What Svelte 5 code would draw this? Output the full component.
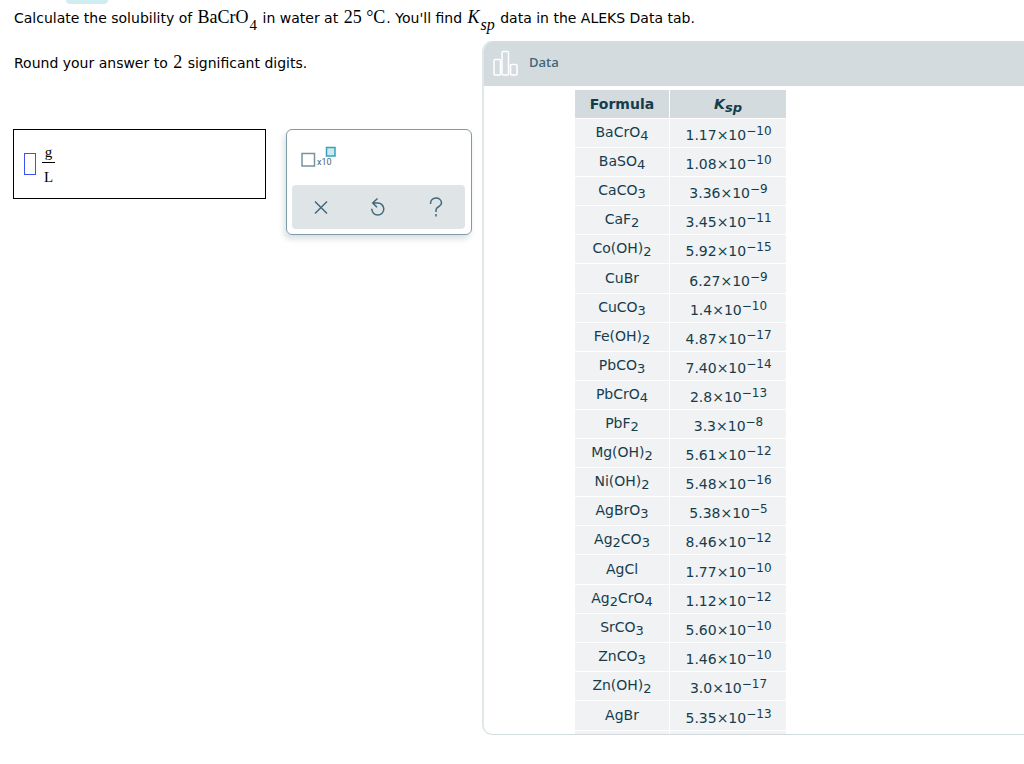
<script lang="ts">
    let answer = '';

    // digits after a letter or bracket are set as subscripts
    const rows = [
        ['BaCrO4', '1.17', '10'],
        ['BaSO4', '1.08', '10'],
        ['CaCO3', '3.36', '9'],
        ['CaF2', '3.45', '11'],
        ['Co(OH)2', '5.92', '15'],
        ['CuBr', '6.27', '9'],
        ['CuCO3', '1.4', '10'],
        ['Fe(OH)2', '4.87', '17'],
        ['PbCO3', '7.40', '14'],
        ['PbCrO4', '2.8', '13'],
        ['PbF2', '3.3', '8'],
        ['Mg(OH)2', '5.61', '12'],
        ['Ni(OH)2', '5.48', '16'],
        ['AgBrO3', '5.38', '5'],
        ['Ag2CO3', '8.46', '12'],
        ['AgCl', '1.77', '10'],
        ['Ag2CrO4', '1.12', '12'],
        ['SrCO3', '5.60', '10'],
        ['ZnCO3', '1.46', '10'],
        ['Zn(OH)2', '3.0', '17'],
        ['AgBr', '5.35', '13']
    ];

    function split(formula: string) {
        return formula.match(/\d+|\D+/g) || [];
    }

    function clearAnswer() {
        answer = '';
    }
</script>

<div class="page">
    <div class="top"><span class="pill"></span></div>

    <p class="question">
        Calculate the solubility of <span class="math">BaCrO<sub>4</sub></span> in water at
        <span class="math">25 °C</span>. You'll find
        <span class="math"><i>K</i><sub class="sp">sp</sub></span> data in the ALEKS Data tab.
    </p>

    <div class="columns">
        <div class="work">
            <p class="round">Round your answer to <span class="math">2</span> significant digits.</p>

            <div class="entry">
                <div class="answer">
                    <input type="text" aria-label="Answer in grams per litre" bind:value={answer} />
                    <span class="fraction">
                        <span class="num">g</span>
                        <span class="den">L</span>
                    </span>
                </div>

                <div class="palette">
                    <button class="sci" aria-label="Scientific notation">
                        <svg width="36" height="22" viewBox="0 0 36 22">
                            <rect x="1" y="7.5" width="12.5" height="12.5" fill="#fff" stroke="#78929e" stroke-width="1.5" />
                            <rect x="25.5" y="1.5" width="8.5" height="8.5" fill="#c9eaf1" stroke="#3ba0b8" stroke-width="1.5" />
                            <text x="16" y="19" font-size="9">x10</text>
                        </svg>
                    </button>
                    <div class="tools">
                        <button aria-label="Clear" on:click={clearAnswer}>
                            <svg width="22" height="22" viewBox="0 0 22 22">
                                <path d="M5 5.5L17 17.5M17 5.5L5 17.5" />
                            </svg>
                        </button>
                        <button aria-label="Undo">
                            <svg width="22" height="22" viewBox="0 0 22 22">
                                <path d="M4.8 12.8A6 6 0 1 0 10.5 7H5.7M10.5 2.5L5.7 7L10 11.3" />
                            </svg>
                        </button>
                        <button aria-label="Help">
                            <svg width="22" height="22" viewBox="0 0 22 22">
                                <path d="M5.5 8C5.2 0.3 16.5 0.3 16.5 7C16.5 11 11 10.5 11 14V16M11 18V20.5" />
                            </svg>
                        </button>
                    </div>
                </div>
            </div>
        </div>

        <section class="panel">
            <header>
                <svg width="26" height="27" viewBox="0 0 26 27">
                    <rect x="1" y="9.5" width="6.5" height="15.5" rx="1" />
                    <rect x="9" y="1.5" width="6.5" height="23.5" rx="1" />
                    <rect x="17.5" y="14.5" width="6.5" height="10.5" rx="1" />
                </svg>
                <h2>Data</h2>
            </header>
            <div class="scroller">
                <table>
                    <thead>
                        <tr>
                            <th>Formula</th>
                            <th><i>K<sub>sp</sub></i></th>
                        </tr>
                    </thead>
                    <tbody>
                        {#each rows as [formula, value, power]}
                            <tr class:plain={!/\d/.test(formula)}>
                                <td>
                                    {#each split(formula) as part}{#if /\d/.test(part)}<sub>{part}</sub>{:else}{part}{/if}{/each}
                                </td>
                                <td class="value">{value}×10<sup>−{power}</sup></td>
                            </tr>
                        {/each}
                        <tr><td></td><td></td></tr>
                    </tbody>
                </table>
            </div>
        </section>
    </div>
</div>

<style>
    :global(body) {
        margin: 0;
        background: #fff;
    }

    .page {
        height: 100vh;
        display: flex;
        flex-direction: column;
        overflow: hidden;
        font-family: Verdana, "DejaVu Sans", sans-serif;
        font-size: 14px;
        color: #000;
    }

    .top {
        height: 6px;
        padding-left: 66px;
    }

    .pill {
        display: block;
        width: 42px;
        height: 4px;
        border-radius: 0 0 8px 8px;
        background: #d0edf2;
    }

    p {
        margin: 0;
        padding-left: 14px;
        line-height: 24px;
        white-space: nowrap;
    }

    .question {
        height: 35px;
    }

    .math {
        margin: 0 1px;
        font-family: "Liberation Serif", "Times New Roman", serif;
        font-size: 18px;
        line-height: 18px;
    }

    .math sub {
        font-size: 15px;
        line-height: 0;
        vertical-align: -7px;
        margin-left: 1px;
    }

    .math .sp {
        font-size: 16px;
        font-style: italic;
    }

    .columns {
        flex: 1;
        min-height: 0;
        display: grid;
        grid-template-columns: 482px 1fr;
        padding-bottom: 29px;
    }

    .round {
        padding-top: 10px;
    }

    .entry {
        display: flex;
        align-items: flex-start;
        gap: 20px;
        padding: 54px 10px 0 13px;
    }

    .answer {
        flex: 1;
        height: 70px;
        box-sizing: border-box;
        display: flex;
        align-items: center;
        gap: 6px;
        padding-left: 10px;
        border: 1px solid #000;
    }

    .answer input {
        width: 12px;
        height: 22px;
        box-sizing: border-box;
        padding: 0;
        border: 1px solid #3d50f5;
        outline: none;
        background: #fff;
    }

    .fraction {
        display: flex;
        flex-direction: column;
        width: 13px;
        font-family: "Liberation Serif", "Times New Roman", serif;
        font-size: 15px;
        line-height: 20px;
        text-align: center;
    }

    .num {
        border-bottom: 1px solid #000;
    }

    .den {
        padding-top: 4px;
    }

    .palette {
        width: 186px;
        height: 106px;
        box-sizing: border-box;
        display: flex;
        flex-direction: column;
        justify-content: space-between;
        padding: 16px 6px 5px 5px;
        border: 1px solid #7e9ba8;
        border-radius: 6px;
        box-shadow: -2px 4px 6px #d9e0e3;
    }

    button {
        display: flex;
        align-items: center;
        justify-content: center;
        padding: 0;
        border: none;
        background: none;
        cursor: pointer;
    }

    .sci {
        align-self: flex-start;
        margin-left: 9px;
    }

    .sci text {
        font-family: Roboto, sans-serif;
        fill: #41687a;
    }

    .tools {
        display: grid;
        grid-template-columns: repeat(3, 1fr);
        height: 44px;
        border-radius: 4px;
        background: #dfe5e7;
    }

    .tools path {
        fill: none;
        stroke: #41687a;
        stroke-width: 1.5;
    }

    .panel {
        min-width: 0;
        min-height: 0;
        display: flex;
        flex-direction: column;
        overflow: hidden;
        box-sizing: border-box;
        border: 1px solid #d3dbde;
        border-left: 2px solid #e1e7e9;
        border-right: none;
        border-radius: 10px 0 0 10px;
    }

    header {
        height: 44px;
        flex-shrink: 0;
        display: flex;
        align-items: center;
        gap: 10px;
        padding-left: 9px;
        background: #d3dbde;
    }

    header svg {
        margin-top: -2px;
    }

    header rect {
        fill: none;
        stroke: #fff;
        stroke-width: 1.5;
    }

    h2 {
        margin: 0;
        padding-bottom: 4px;
        font-family: "Open Sans", sans-serif;
        font-size: 13px;
        line-height: 18px;
        font-weight: 600;
        color: #41687a;
    }

    .scroller {
        flex: 1;
        min-height: 0;
        overflow: hidden;
        padding: 3px 0 0 90px;
    }

    table {
        width: 213px;
        table-layout: fixed;
        border-spacing: 1px;
        color: #163c4c;
        text-align: center;
    }

    th,
    td {
        height: 28px;
        padding: 0;
        background: #f0f2f4;
        line-height: 20px;
    }

    th {
        background: #d3dbde;
    }

    th:first-child {
        width: 94px;
    }

    .plain td {
        height: 29px;
    }

    td:first-child {
        padding-bottom: 2px;
        height: 26px;
    }

    .plain td:first-child {
        height: 27px;
    }

    .value {
        padding: 4px 0 0 1px;
        height: 24px;
    }

    .plain .value {
        height: 25px;
    }

    table sub,
    table sup {
        font-size: 13px;
        line-height: 0;
    }

    table sub {
        vertical-align: -3px;
    }

    table sup {
        font-size: 12px;
        vertical-align: 5px;
    }
</style>
